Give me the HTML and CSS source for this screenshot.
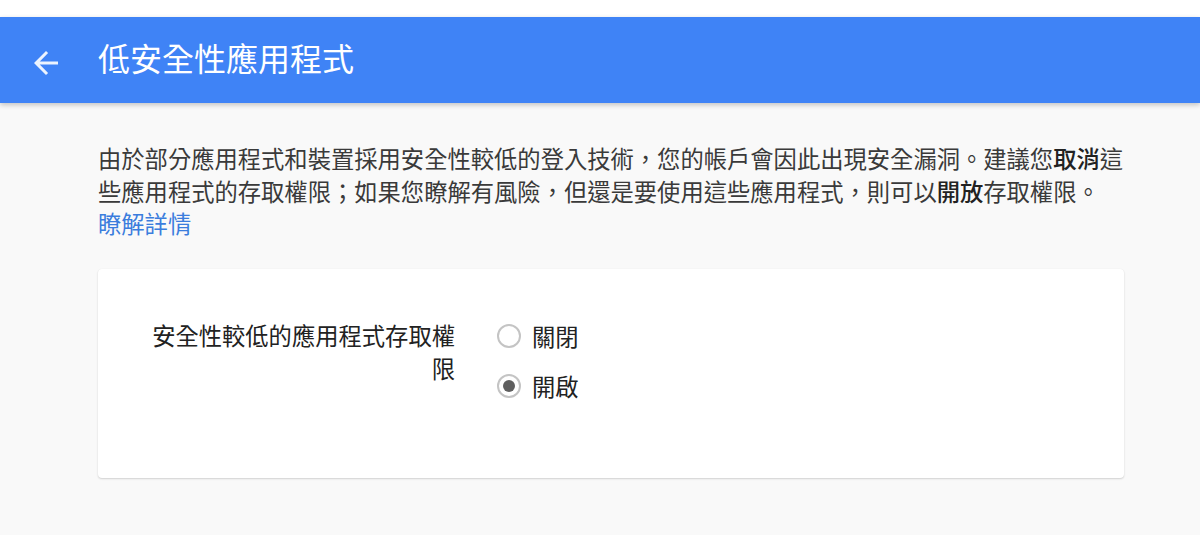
FILE: index.html
```html
<!DOCTYPE html>
<html lang="zh-Hant">
<head>
<meta charset="utf-8">
<title>低安全性應用程式</title>
<link rel="stylesheet" href="styles.css">
</head>
<body>
<div class="topstrip"></div>
<header class="appbar">
  <span class="back" aria-label="返回">
    <svg viewBox="0 0 24 24" width="36" height="36"><path fill="currentColor" d="M20 11H7.83l5.59-5.59L12 4l-8 8 8 8 1.41-1.41L7.83 13H20v-2z"/></svg>
  </span>
  <h1 class="title">低安全性應用程式</h1>
</header>
<main class="content">
  <p class="intro">由於部分應用程式和裝置採用安全性較低的登入技術，您的帳戶會因此出現安全漏洞。建議您<b>取消</b>這些應用程式的存取權限；如果您瞭解有風險，但還是要使用這些應用程式，則可以<b>開放</b>存取權限。<br><a class="link" href="#">瞭解詳情</a></p>
  <section class="card">
    <div class="label">安全性較低的應用程式存取權限</div>
    <div class="options">
      <label class="option"><span class="radio"></span><span>關閉</span></label>
      <label class="option"><span class="radio checked"></span><span>開啟</span></label>
    </div>
  </section>
</main>
</body>
</html>
```
FILE: styles.css
```css
html, body {
  margin: 0;
  padding: 0;
  background: #f9f9f9;
  font-family: Roboto, "Noto Sans CJK TC", sans-serif;
  color: #3a3a3a;
}
.topstrip {
  height: 17px;
  background: #ffffff;
}
.appbar {
  height: 86px;
  background: #3f83f6;
  display: flex;
  align-items: center;
  box-shadow: 0 2px 5px rgba(0,0,0,0.22);
  position: relative;
}
.back {
  width: 36px;
  height: 36px;
  margin-left: 28px;
  margin-top: 6px;
  color: rgba(255,255,255,0.9);
  display: flex;
}
.title {
  margin: 0 0 0 34px;
  font-size: 32px;
  font-weight: 400;
  color: #ffffff;
  line-height: 40px;
}
.content {
  padding: 41px 0 40px 98px;
  width: 1026px;
}
.intro {
  margin: 0;
  font-size: 23.3px;
  line-height: 32.5px;
}
.intro b {
  font-weight: 500;
  color: #222;
}
.link {
  color: #3b7ddd;
  text-decoration: none;
}
.card {
  margin-top: 27px;
  background: #ffffff;
  border-radius: 4px;
  box-shadow: 0 1px 2px rgba(0,0,0,0.16), 0 0 1px rgba(0,0,0,0.06);
  display: flex;
  align-items: flex-start;
  padding: 42px 0 67px 0;
}
.label {
  width: 320px;
  margin-left: 37px;
  margin-top: 10px;
  text-align: right;
  font-size: 23.3px;
  line-height: 33px;
  color: #222;
}
.options {
  margin-left: 42px;
  display: flex;
  flex-direction: column;
}
.option {
  height: 50px;
  display: flex;
  align-items: center;
  font-size: 23.3px;
  color: #222;
}
.radio {
  width: 20px;
  height: 20px;
  border: 2px solid #c4c4c4;
  border-radius: 50%;
  margin-right: 11px;
  box-sizing: content-box;
  display: flex;
  align-items: center;
  justify-content: center;
}
.radio.checked::after {
  content: "";
  width: 12px;
  height: 12px;
  border-radius: 50%;
  background: #5f5f5f;
}
```
